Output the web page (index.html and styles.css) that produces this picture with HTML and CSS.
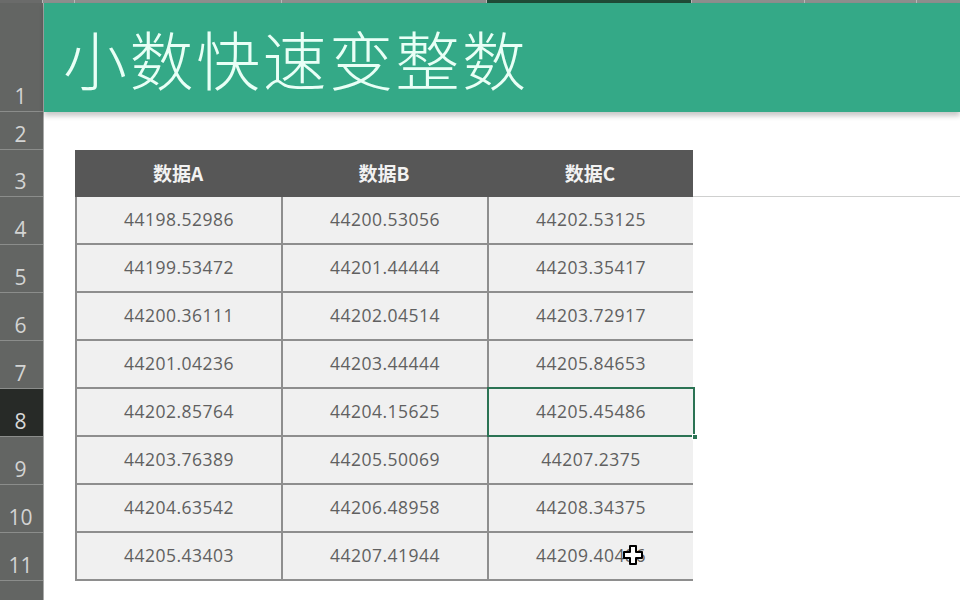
FILE: index.html
```html
<!DOCTYPE html>
<html lang="zh">
<head>
<meta charset="utf-8">
<title>小数快速变整数</title>
<link rel="stylesheet" href="styles.css">
</head>
<body>
<div class="sheet">
  <div class="colheads">
    <div class="ch corner"></div>
    <div class="ch w-a"></div>
    <div class="ch w-b"></div>
    <div class="ch w-c"></div>
    <div class="ch w-d sel"></div>
    <div class="ch w-e"></div>
    <div class="ch w-f"></div>
    <div class="ch rest"></div>
  </div>
  <div class="main">
    <div class="rowheads">
      <div class="rh r1">1</div>
      <div class="rh r2">2</div>
      <div class="rh r3">3</div>
      <div class="rh">4</div>
      <div class="rh">5</div>
      <div class="rh">6</div>
      <div class="rh">7</div>
      <div class="rh active">8</div>
      <div class="rh">9</div>
      <div class="rh">10</div>
      <div class="rh">11</div>
      <div class="rh last"></div>
    </div>
    <div class="content">
      <div class="banner"><h1 class="title">小数快速变整数</h1></div>
      <div class="row2"></div>
      <div class="tablewrap">
        <div class="thead">
          <div class="th">数据A</div>
          <div class="th">数据B</div>
          <div class="th">数据C</div>
        </div>
        <div class="tbody">
          <div class="td">44198.52986</div><div class="td">44200.53056</div><div class="td">44202.53125</div>
          <div class="td">44199.53472</div><div class="td">44201.44444</div><div class="td">44203.35417</div>
          <div class="td">44200.36111</div><div class="td">44202.04514</div><div class="td">44203.72917</div>
          <div class="td">44201.04236</div><div class="td">44203.44444</div><div class="td">44205.84653</div>
          <div class="td">44202.85764</div><div class="td">44204.15625</div><div class="td selected">44205.45486<span class="handle"></span></div>
          <div class="td">44203.76389</div><div class="td">44205.50069</div><div class="td">44207.2375</div>
          <div class="td">44204.63542</div><div class="td">44206.48958</div><div class="td">44208.34375</div>
          <div class="td">44205.43403</div><div class="td">44207.41944</div><div class="td cursor-cell">44209.40486<svg class="cursor" width="22" height="22" viewBox="0 0 22 22"><path d="M8 2h6v6h6v6h-6v6H8v-6H2V8h6z" fill="#fff" stroke="#000" stroke-width="2" stroke-linejoin="round"/></svg></div>
        </div>
      </div>
    </div>
  </div>
</div>
</body>
</html>
```
FILE: styles.css
```css
* { box-sizing: border-box; }
html, body { margin: 0; padding: 0; }
body {
  width: 960px;
  height: 600px;
  overflow: hidden;
  background: #ffffff;
  font-family: "Open Sans", "Noto Sans CJK SC", sans-serif;
}
.sheet { display: flex; flex-direction: column; width: 960px; height: 600px; }

.colheads { display: flex; height: 3px; background: #8d8e8d; }
.ch { height: 3px; border-right: 1px solid #b8b8b8; }
.corner { width: 43px; background: #6a6b6a; }
.w-a { width: 32px; }
.w-b { width: 207px; }
.w-c { width: 205px; }
.w-d { width: 205px; }
.sel { background: #1f4a36; }
.w-e { width: 113px; }
.w-f { width: 112px; }
.rest { flex: 1; border-right: 0; }

.main { display: flex; flex: 1; }

.rowheads {
  width: 44px;
  display: flex;
  flex-direction: column;
  background: #636563;
  border-right: 1px solid #a9aaa9;
}
.rh {
  height: 48px;
  border-bottom: 1px solid #8b8d8b;
  color: #d3d4d3;
  font-family: "Open Sans", sans-serif;
  font-size: 21px;
  line-height: 1;
  display: flex;
  align-items: flex-end;
  justify-content: center;
  padding-bottom: 4px;
  padding-right: 2px;
}
.rh.r1 { height: 109px; }
.rh.r2 { height: 38px; }
.rh.r3 { height: 47px; }
.rh.active { background: #272a27; color: #d8d8d8; }
.rh.last { flex: 1; border-bottom: 0; }

.content { flex: 1; display: flex; flex-direction: column; }

.banner {
  height: 109px;
  background: #34a987;
  box-shadow: 0 4px 5px rgba(0, 0, 0, 0.22);
  position: relative;
  z-index: 1;
  display: flex;
  align-items: center;
  padding-left: 19px;
}
.title {
  margin: 0;
  font-family: "Noto Sans CJK SC", sans-serif;
  font-weight: 300;
  font-size: 64px;
  letter-spacing: 2.5px;
  line-height: 1;
  color: #e9fff6;
  padding-bottom: 2px;
}

.row2 { height: 38px; }

.tablewrap {
  margin-left: 31px;
  width: 618px;
  position: relative;
}
.tablewrap::after {
  content: "";
  position: absolute;
  left: 618px;
  top: 46px;
  width: 300px;
  height: 1px;
  background: #cfd0cf;
}
.thead {
  display: flex;
  height: 47px;
  background: #575757;
}
.th {
  flex: 1;
  display: flex;
  align-items: center;
  justify-content: center;
  color: #f2f2f2;
  font-family: "Noto Sans CJK SC", sans-serif;
  font-weight: 700;
  font-size: 19px;
  padding-bottom: 2px;
}
.tbody {
  display: grid;
  grid-template-columns: 204px 204px 204px;
  grid-auto-rows: 46px;
  gap: 2px;
  padding: 0 2px 2px 2px;
  background: #8e8e8e;
}
.td {
  background: #f0f0f0;
  display: flex;
  align-items: center;
  justify-content: center;
  color: #606060;
  font-family: "Open Sans", sans-serif;
  font-size: 17.5px;
  letter-spacing: 0.5px;
  padding-bottom: 2px;
  position: relative;
}
.td.selected { outline: 2px solid #2b7354; outline-offset: 0; z-index: 2; }
.handle {
  position: absolute;
  right: -5px;
  bottom: -5px;
  width: 6px;
  height: 6px;
  background: #2b7354;
  border: 1px solid #ffffff;
}
.cursor {
  position: absolute;
  left: 133px;
  top: 11px;
}
```
